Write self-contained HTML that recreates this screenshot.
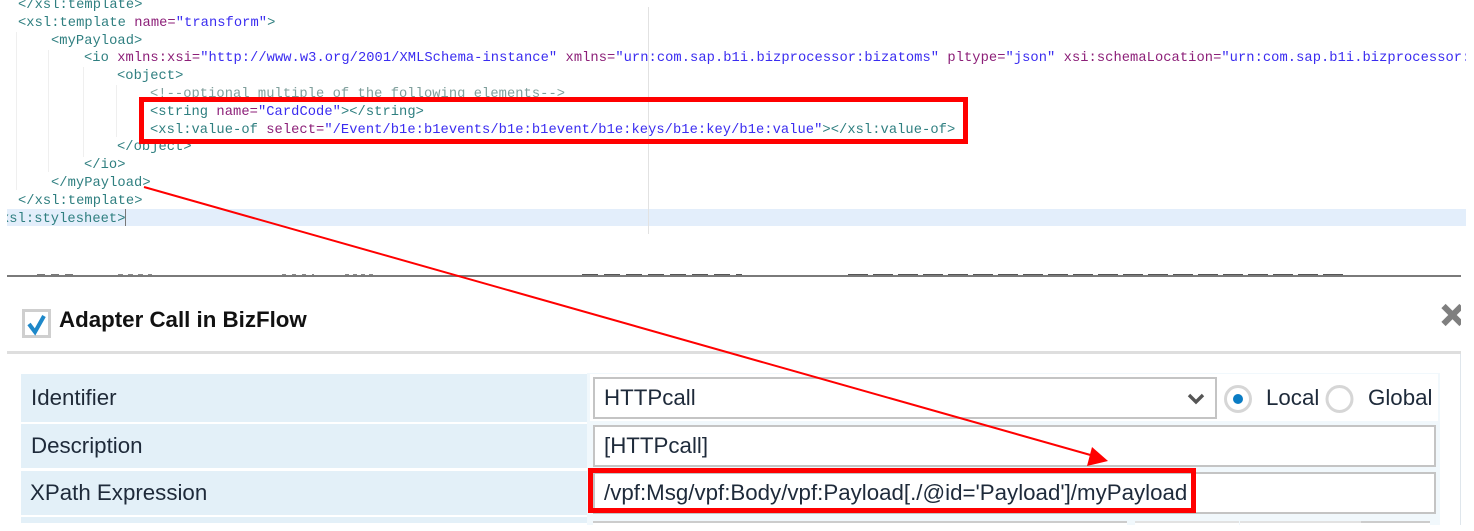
<!DOCTYPE html>
<html><head><meta charset="utf-8">
<style>
html,body{margin:0;padding:0;background:#fff}
#p{position:relative;width:1474px;height:531px;overflow:hidden;background:#fff;font-family:"Liberation Sans",sans-serif}
.a{position:absolute}
#code{position:absolute;left:7px;top:0;width:1459px;height:234px;overflow:hidden}
.l{position:absolute;white-space:pre;font:13.75px/18px "Liberation Mono",monospace;letter-spacing:.05px;color:#2f7f80;filter:blur(.25px)}
.n{color:#8c1f78}.v{color:#3a2cf0}.c{color:#7f9f9c}
.g{position:absolute;width:1px;background:#efefef}
.t{position:absolute;font-size:22.3px;line-height:26px;color:#1e2a3a;white-space:pre}
.lab{position:absolute;left:21px;width:566px;background:#e3f0f8}
.box{position:absolute;background:#fff;border:2px solid #c4c4c4;box-sizing:border-box}
</style></head><body>
<div id="p">
<div class="a" style="left:7px;top:209px;width:1459px;height:17px;background:#e3eefb"></div>
<div class="a" style="left:648px;top:7px;width:1px;height:227px;background:#e2e2e2"></div>
<div class="g" style="left:16px;top:32px;height:158px"></div>
<div class="g" style="left:48px;top:50px;height:122px"></div>
<div class="g" style="left:83px;top:67px;height:90px"></div>
<div class="g" style="left:116px;top:85px;height:52px"></div>
<div id="code">
<div class="l" style="left:11px;top:-3px">&lt;/xsl:template&gt;</div>
<div class="l" style="left:11px;top:15px">&lt;xsl:template <span class="n">name=</span><span class="v">"transform"</span>&gt;</div>
<div class="l" style="left:44px;top:33px">&lt;myPayload&gt;</div>
<div class="l" style="left:77px;top:50px">&lt;io <span class="n">xmlns:xsi=</span><span class="v">"http://www.w3.org/2001/XMLSchema-instance"</span> <span class="n">xmlns=</span><span class="v">"urn:com.sap.b1i.bizprocessor:bizatoms"</span> <span class="n">pltype=</span><span class="v">"json"</span> <span class="n">xsi:schemaLocation=</span><span class="v">"urn:com.sap.b1i.bizprocessor:</span></div>
<div class="l" style="left:110px;top:68px">&lt;object&gt;</div>
<div class="l c" style="left:143px;top:86px">&lt;!--optional multiple of the following elements--&gt;</div>
<div class="l" style="left:143px;top:104px">&lt;string <span class="n">name=</span><span class="v">"CardCode"</span>&gt;&lt;/string&gt;</div>
<div class="l" style="left:143px;top:122px">&lt;xsl:value-of <span class="n">select=</span><span class="v">"/Event/b1e:b1events/b1e:b1event/b1e:keys/b1e:key/b1e:value"</span>&gt;&lt;/xsl:value-of&gt;</div>
<div class="l" style="left:110px;top:139px">&lt;/object&gt;</div>
<div class="l" style="left:77px;top:157px">&lt;/io&gt;</div>
<div class="l" style="left:44px;top:175px">&lt;/myPayload&gt;</div>
<div class="l" style="left:11px;top:193px">&lt;/xsl:template&gt;</div>
<div class="l" style="left:-6px;top:211px">xsl:stylesheet&gt;</div>
</div>
<div class="a" style="left:125px;top:209px;width:1px;height:17px;background:#777"></div>

<div class="a" style="left:139px;top:97px;width:829px;height:47px;border:5px solid #f00;box-sizing:border-box"></div>

<!-- clipped text remains and rule -->
<div class="a" style="left:7px;top:275px;width:1454px;height:2px;background:#7a7a7a"></div>
<div class="a" style="left:37px;top:274px;width:40px;height:1px;background:repeating-linear-gradient(90deg,#777 0 8px,transparent 8px 14px)"></div>
<div class="a" style="left:118px;top:274px;width:34px;height:1px;background:repeating-linear-gradient(90deg,#888 0 5px,transparent 5px 10px)"></div>
<div class="a" style="left:282px;top:274px;width:32px;height:1px;background:repeating-linear-gradient(90deg,#888 0 4px,transparent 4px 10px)"></div>
<div class="a" style="left:345px;top:274px;width:30px;height:1px;background:repeating-linear-gradient(90deg,#888 0 4px,transparent 4px 8px)"></div>
<div class="a" style="left:582px;top:274px;width:160px;height:1px;background:repeating-linear-gradient(90deg,#555 0 16px,transparent 16px 22px)"></div>
<div class="a" style="left:848px;top:274px;width:495px;height:1px;background:repeating-linear-gradient(90deg,#555 0 20px,transparent 20px 25px)"></div>

<!-- dialog -->
<div class="a" style="left:7px;top:351px;width:1454px;height:3px;background:#dedede"></div>
<div class="a" style="left:1460px;top:354px;width:1px;height:171px;background:#dfe6ec"></div>
<div class="a" style="left:22px;top:309px;width:29px;height:29px;border:3px solid #cfcfcf;box-sizing:border-box;background:#fff"></div>
<svg class="a" style="left:22px;top:309px" width="29" height="29" viewBox="0 0 29 29"><path d="M7 15 L13 23 L22 7" fill="none" stroke="#1e88c9" stroke-width="4"/></svg>
<div class="a" style="left:59px;top:306px;font-size:22.3px;line-height:28px;font-weight:bold;color:#111;white-space:pre">Adapter Call in BizFlow</div>
<svg class="a" style="left:1440px;top:301px" width="21" height="28" viewBox="0 0 21 28"><path d="M3.500 5 L21.500 23 M21.500 5 L3.500 23" fill="none" stroke="#7f7f7f" stroke-width="6"/></svg>

<div class="a" style="left:587px;top:373px;width:853px;height:152px;background:#f1f8fc"></div>
<div class="a" style="left:590px;top:374px;width:848px;height:47px;background:#fff"></div>
<div class="lab" style="top:374px;height:48px"></div>
<div class="lab" style="top:424px;height:44px"></div>
<div class="lab" style="top:471px;height:44px"></div>
<div class="lab" style="top:517px;height:6px"></div>
<div class="t" style="left:31px;top:385px;color:#1f2a38">Identifier</div>
<div class="t" style="left:31px;top:433px">Description</div>
<div class="t" style="left:30px;top:480px">XPath Expression</div>

<div class="box" style="left:593px;top:377px;width:624px;height:42px"></div>
<div class="box" style="left:593px;top:425px;width:843px;height:42px"></div>
<div class="box" style="left:593px;top:472px;width:843px;height:42px"></div>
<div class="a" style="left:593px;top:521px;width:534px;height:4px;background:#fff;border-top:2px solid #ccc;box-sizing:border-box"></div>
<div class="a" style="left:1135px;top:521px;width:104px;height:4px;background:#fff;border-top:2px solid #e2e2e2;box-sizing:border-box"></div>
<div class="a" style="left:1240px;top:521px;width:190px;height:4px;background:#fff;border-top:2px solid #e2e2e2;box-sizing:border-box"></div>
<div class="a" style="left:1361px;top:521px;width:69px;height:4px;border-top:2px solid #ccc;box-sizing:border-box"></div>

<div class="t" style="left:604px;top:385px">HTTPcall</div>
<div class="t" style="left:604px;top:433px">[HTTPcall]</div>
<div class="t" style="left:604px;top:480px">/vpf:Msg/vpf:Body/vpf:Payload[./@id='Payload']/myPayload</div>
<svg class="a" style="left:1186px;top:390px" width="20" height="16" viewBox="0 0 20 16"><path d="M3 5 L10 12 L17 5" fill="none" stroke="#555" stroke-width="3.4"/></svg>
<svg class="a" style="left:1222px;top:383px" width="134" height="32" viewBox="0 0 134 32"><circle cx="16" cy="16" r="12.5" fill="#fff" stroke="#d6d6d6" stroke-width="3"/><circle cx="16" cy="16" r="5" fill="#0a7cc4"/><circle cx="117.500" cy="16" r="12.500" fill="#fff" stroke="#d6d6d6" stroke-width="3"/></svg>
<div class="t" style="left:1266px;top:385px">Local</div>
<div class="t" style="left:1368px;top:385px">Global</div>

<div class="a" style="left:588px;top:468px;width:608px;height:45px;border:5px solid #f00;box-sizing:border-box"></div>

<svg class="a" style="left:0;top:0" width="1474" height="531" viewBox="0 0 1474 531"><line x1="144" y1="187" x2="1094" y2="456" stroke="#f00" stroke-width="2"/><path d="M1108 461 L1092 447 L1087 466 Z" fill="#f00"/></svg>
</div>
</body></html>
